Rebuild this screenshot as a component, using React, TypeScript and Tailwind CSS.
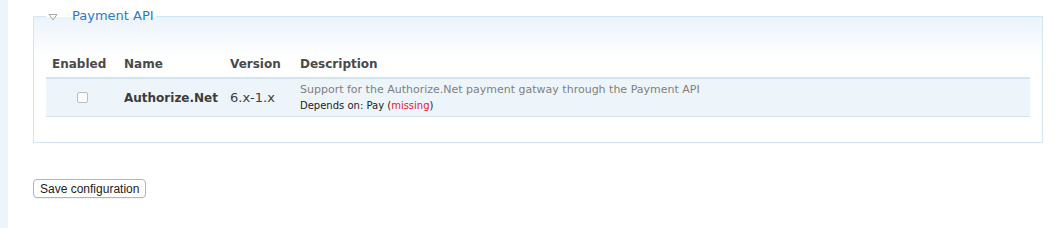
import React from "react";

export default function App() {
  return (
    <div className="flex w-[1060px] h-[228px] bg-white" style={{ fontFamily: '"DejaVu Sans", Verdana, sans-serif' }}>
      <div className="w-[8px] shrink-0 bg-[#edf5fb]" />
      <div className="flex-1 pl-[25px] pr-[17px] pt-[8px]">
        <fieldset className="border border-[#d4e6f3] bg-gradient-to-b from-[#ebf3fa] to-white to-[40px] px-[12px] pb-[25px] pt-0 m-0 min-w-0">
          <legend className="ml-0 px-[2px] flex items-center text-[13px] text-[#2a7ccb] leading-[16px]">
            <svg width="10" height="8" viewBox="0 0 10 8" className="mr-[14px] mt-[1px]">
              <path d="M1 1.5 L9 1.5 L5 7 Z" fill="none" stroke="#a9a9a9" strokeWidth="1" />
            </svg>
            Payment API
          </legend>
          <div className="mt-[24px] text-[13px]">
            <div className="flex h-[31px] items-end pb-[4px] border-b-2 border-[#d3e5f3] font-bold text-[12px] text-[#4a4a4a]">
              <div className="w-[72px] pl-[6px]">Enabled</div>
              <div className="w-[106px] pl-[6px]">Name</div>
              <div className="w-[70px] pl-[6px]">Version</div>
              <div className="flex-1 pl-[6px]">Description</div>
            </div>
            <div className="flex h-[38px] items-center bg-[#edf5fb] border-b border-[#d3e5f3]">
              <div className="w-[72px] flex justify-center">
                <div className="w-[11px] h-[11px] rounded-[2px] border border-[#bdbdbd] bg-[#fbfbfb]" />
              </div>
              <div className="w-[106px] pl-[6px] font-bold text-[12px] text-[#3c3c3c] whitespace-nowrap">Authorize.Net</div>
              <div className="w-[70px] pl-[6px] text-[#3c3c3c]">6.x-1.x</div>
              <div className="flex-1 pl-[6px] text-[11px] leading-[16px]">
                <div className="text-[#7f7f7f]">Support for the Authorize.Net payment gatway through the Payment API</div>
                <div className="text-[#222] text-[10px]">
                  Depends on: Pay (<span className="text-[#e0231f]">missing</span>)
                </div>
              </div>
            </div>
          </div>
        </fieldset>
        <button
          className="mt-[36px] h-[19px] px-[6px] border border-[#b5b5b5] rounded-[4px] bg-white text-[12px] leading-[16px] text-[#222] shadow-[0_1px_0_rgba(0,0,0,0.05)]"
          style={{ fontFamily: '"Liberation Sans", Arial, sans-serif' }}
        >
          Save configuration
        </button>
      </div>
    </div>
  );
}
